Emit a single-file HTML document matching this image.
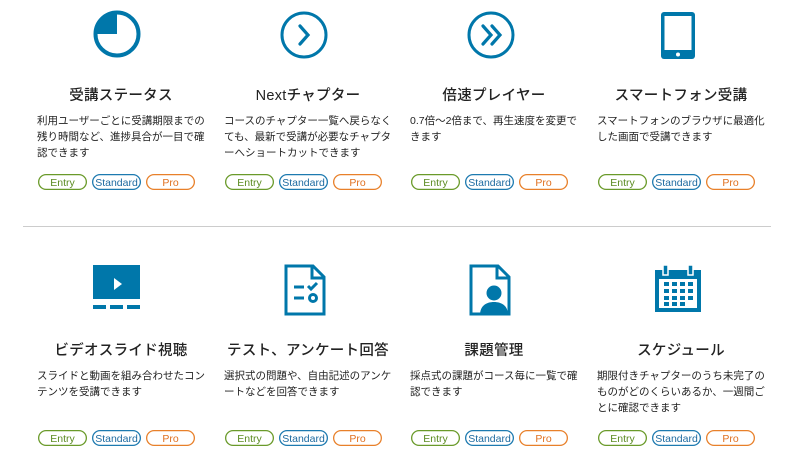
<!DOCTYPE html>
<html><head><meta charset="utf-8"><style>
*{margin:0;padding:0;box-sizing:border-box}
body{width:800px;height:452px;background:#fff;position:relative;overflow:hidden;font-family:"Liberation Sans","Noto Sans CJK JP",sans-serif;color:#222}
.c{position:absolute;width:168px}
.t{position:absolute;left:0;width:168px;text-align:center;font-size:14.5px;font-weight:500;letter-spacing:0.3px}
.d{position:absolute;left:0;width:174px;font-size:10.5px;line-height:16px;letter-spacing:0}
.b{position:absolute;left:1px;display:flex;gap:5px}
.b span{display:block;width:49px;height:16px;border-radius:8px;font-family:"Liberation Sans",sans-serif;font-size:10.5px;line-height:18px;text-align:center}
.e{box-shadow:inset 0 0 0 1.3px #6a9a2a;color:#5a8a20}
.s{box-shadow:inset 0 0 0 1.3px #1d7ab0;color:#1d6aa0}
.p{box-shadow:inset 0 0 0 1.3px #e8802a;color:#e07020}
svg{position:absolute}
hr{position:absolute;left:23px;top:226px;width:748px;border:0;border-top:1px solid #ccc}
</style></head><body>
<svg style="left:93px;top:10px" width="48" height="48" viewBox="0 0 48 48"><circle cx="24" cy="24" r="21.5" fill="none" stroke="#0077aa" stroke-width="4"/><path d="M24 24V2.5A21.5 21.5 0 0 0 2.5 24Z" fill="#0077aa"/></svg>
<svg style="left:280px;top:11px" width="48" height="48" viewBox="0 0 48 48"><circle cx="24" cy="24" r="22" fill="none" stroke="#0077aa" stroke-width="3"/><path d="M20 15l8 9-8 9" fill="none" stroke="#0077aa" stroke-width="3.2" stroke-linecap="round"/></svg>
<svg style="left:467px;top:11px" width="48" height="48" viewBox="0 0 48 48"><circle cx="24" cy="24" r="22" fill="none" stroke="#0077aa" stroke-width="3"/><path d="M16 15l8 9-8 9M25 15l8 9-8 9" fill="none" stroke="#0077aa" stroke-width="3.2" stroke-linecap="round"/></svg>
<svg style="left:661px;top:12px" width="34" height="47" viewBox="0 0 34 47"><rect x="0" y="0" width="34" height="47" rx="3" fill="#0077aa"/><rect x="3.5" y="4" width="27" height="34" fill="#fff"/><circle cx="17" cy="42.5" r="2" fill="#fff"/></svg>
<svg style="left:93px;top:265px" width="48" height="46" viewBox="0 0 48 46"><rect x="0" y="0" width="47" height="34" fill="#0077aa"/><path d="M21 13l8 6-8 6z" fill="#fff"/><rect x="0" y="40" width="13" height="4" fill="#0077aa"/><rect x="17" y="40" width="13" height="4" fill="#0077aa"/><rect x="34" y="40" width="13" height="4" fill="#0077aa"/></svg>
<svg style="left:284px;top:264px" width="44" height="52" viewBox="0 0 44 52"><path d="M2 2h27l11 11v37H2z" fill="none" stroke="#0077aa" stroke-width="3"/><path d="M28 2v12h12" fill="none" stroke="#0077aa" stroke-width="3"/><path d="M10 23h10M10 34h10" stroke="#0077aa" stroke-width="3"/><path d="M24 22l3 3 6-6" fill="none" stroke="#0077aa" stroke-width="3"/><circle cx="29" cy="34" r="3.5" fill="none" stroke="#0077aa" stroke-width="3"/></svg>
<svg style="left:469px;top:264px" width="46" height="52" viewBox="0 0 46 52"><path d="M2 2h27l11 11v37H2z" fill="none" stroke="#0077aa" stroke-width="3"/><path d="M28 2v12h12" fill="none" stroke="#0077aa" stroke-width="3"/><circle cx="25" cy="29" r="7.5" fill="#0077aa"/><path d="M11 51c0-9 6-13 14-13s14 4 14 13z" fill="#0077aa"/></svg>
<svg style="left:655px;top:265px" width="46" height="47" viewBox="0 0 46 47"><rect x="0" y="5" width="46" height="42" fill="#0077aa"/><rect x="4" y="14" width="38" height="29" fill="#fff"/><rect x="8" y="0" width="5" height="10" fill="#0077aa" stroke="#fff" stroke-width="1.5"/><rect x="33" y="0" width="5" height="10" fill="#0077aa" stroke="#fff" stroke-width="1.5"/>
<g fill="#0077aa"><rect x="9" y="17" width="5" height="4"/><rect x="17" y="17" width="5" height="4"/><rect x="25" y="17" width="5" height="4"/><rect x="33" y="17" width="5" height="4"/><rect x="9" y="24" width="5" height="4"/><rect x="17" y="24" width="5" height="4"/><rect x="25" y="24" width="5" height="4"/><rect x="33" y="24" width="5" height="4"/><rect x="9" y="31" width="5" height="4"/><rect x="17" y="31" width="5" height="4"/><rect x="25" y="31" width="5" height="4"/><rect x="33" y="31" width="5" height="4"/><rect x="9" y="37" width="5" height="4"/><rect x="17" y="37" width="5" height="4"/><rect x="25" y="37" width="5" height="4"/></g></svg>

<div class="c" style="left:37px;top:0">
<div class="t" style="top:84px">受講ステータス</div>
<div class="d" style="top:113px">利用ユーザーごとに受講期限までの<br>残り時間など、進捗具合が一目で確<br>認できます</div>
<div class="b" style="top:174px"><span class="e">Entry</span><span class="s">Standard</span><span class="p">Pro</span></div></div>
<div class="c" style="left:224px;top:0">
<div class="t" style="top:84px">Nextチャプター</div>
<div class="d" style="top:113px">コースのチャプター一覧へ戻らなく<br>ても、最新で受講が必要なチャプタ<br>ーへショートカットできます</div>
<div class="b" style="top:174px"><span class="e">Entry</span><span class="s">Standard</span><span class="p">Pro</span></div></div>
<div class="c" style="left:410px;top:0">
<div class="t" style="top:84px">倍速プレイヤー</div>
<div class="d" style="top:113px">0.7倍～2倍まで、再生速度を変更で<br>きます</div>
<div class="b" style="top:174px"><span class="e">Entry</span><span class="s">Standard</span><span class="p">Pro</span></div></div>
<div class="c" style="left:597px;top:0">
<div class="t" style="top:84px">スマートフォン受講</div>
<div class="d" style="top:113px">スマートフォンのブラウザに最適化<br>した画面で受講できます</div>
<div class="b" style="top:174px"><span class="e">Entry</span><span class="s">Standard</span><span class="p">Pro</span></div></div>
<hr>
<div class="c" style="left:37px;top:0">
<div class="t" style="top:339px">ビデオスライド視聴</div>
<div class="d" style="top:368px">スライドと動画を組み合わせたコン<br>テンツを受講できます</div>
<div class="b" style="top:430px"><span class="e">Entry</span><span class="s">Standard</span><span class="p">Pro</span></div></div>
<div class="c" style="left:224px;top:0">
<div class="t" style="top:339px">テスト、アンケート回答</div>
<div class="d" style="top:368px">選択式の問題や、自由記述のアンケ<br>ートなどを回答できます</div>
<div class="b" style="top:430px"><span class="e">Entry</span><span class="s">Standard</span><span class="p">Pro</span></div></div>
<div class="c" style="left:410px;top:0">
<div class="t" style="top:339px">課題管理</div>
<div class="d" style="top:368px">採点式の課題がコース毎に一覧で確<br>認できます</div>
<div class="b" style="top:430px"><span class="e">Entry</span><span class="s">Standard</span><span class="p">Pro</span></div></div>
<div class="c" style="left:597px;top:0">
<div class="t" style="top:339px">スケジュール</div>
<div class="d" style="top:368px">期限付きチャプターのうち未完了の<br>ものがどのくらいあるか、一週間ご<br>とに確認できます</div>
<div class="b" style="top:430px"><span class="e">Entry</span><span class="s">Standard</span><span class="p">Pro</span></div></div>
</body></html>
